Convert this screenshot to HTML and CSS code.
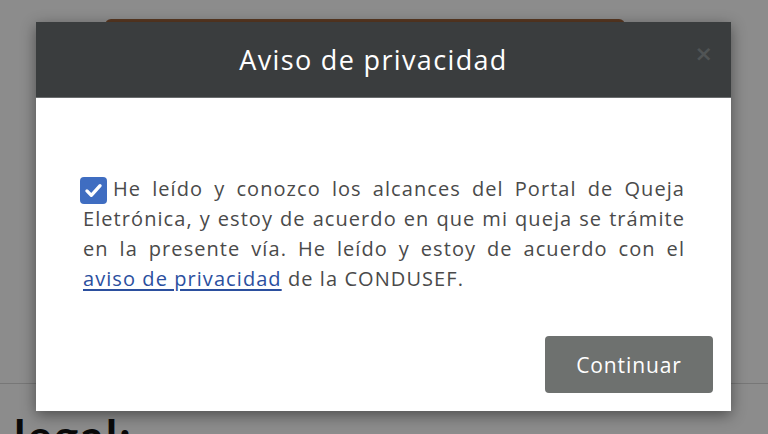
FILE: index.html
```html
<!DOCTYPE html>
<html lang="es">
<head>
<meta charset="utf-8">
<title>Aviso de privacidad</title>
<link rel="stylesheet" href="styles.css">
</head>
<body>
<div class="page">
  <div class="page-bar"></div>
  <div class="page-spacer"></div>
  <div class="page-rule"></div>
  <h2 class="page-heading">legal:</h2>
</div>
<div class="backdrop"></div>
<div class="modal" role="dialog" aria-labelledby="modal-title">
  <header class="modal-header">
    <h1 id="modal-title" class="modal-title">Aviso de privacidad</h1>
    <button class="modal-close" aria-label="Cerrar">&times;</button>
  </header>
  <div class="modal-body">
    <p class="consent">
      <span class="checkbox" aria-checked="true" role="checkbox">
        <svg viewBox="0 0 24 24" width="21" height="21"><path d="M4.5 12.5 L9.5 17.5 L19.5 6.5" fill="none" stroke="#fff" stroke-width="3.8" stroke-linecap="round" stroke-linejoin="round"/></svg>
      </span>He leído y conozco los alcances del Portal de Queja Eletrónica, y estoy de acuerdo en que mi queja se trámite en la presente vía. He leído y estoy de acuerdo con el <a href="#" class="link">aviso de privacidad</a> de la CONDUSEF.
    </p>
  </div>
  <footer class="modal-footer">
    <button class="btn-continue">Continuar</button>
  </footer>
</div>
</body>
</html>
```

FILE: styles.css
```css
* { box-sizing: border-box; }
html, body { margin: 0; padding: 0; }
body {
  width: 768px;
  height: 434px;
  overflow: hidden;
  background: #ffffff;
  font-family: "Open Sans", "Liberation Sans", sans-serif;
  position: relative;
}
.page {
  height: 434px;
  overflow: hidden;
  display: flex;
  flex-direction: column;
  padding: 19px 0 0 0;
}
.page > * { flex-shrink: 0; }
.page-bar {
  margin: 0 143px 0 105px;
  height: 30px;
  background: #a0673e;
  border-radius: 6px 6px 0 0;
}
.page-spacer { height: 334px; }
.page-rule {
  height: 1px;
  background: #d9d9d9;
}
.page-heading {
  margin: 29px 0 0 14px;
  font-family: "Lato", "Liberation Sans", sans-serif;
  font-weight: 700;
  font-size: 46px;
  line-height: 46px;
  letter-spacing: 2px;
  color: #111;
}
.backdrop {
  position: absolute;
  inset: 0;
  background: rgba(0, 0, 0, 0.45);
}
.modal {
  position: absolute;
  left: 36px;
  top: 22px;
  width: 695px;
  height: 389px;
  background: #fff;
  display: flex;
  flex-direction: column;
  box-shadow: 0 4px 14px rgba(0,0,0,0.45);
}
.modal-header {
  height: 76px;
  background: #3a3d3e;
  display: flex;
  align-items: center;
  justify-content: center;
  position: relative;
  border-bottom: 1px solid #6a6d6e;
}
.modal-title {
  margin: 0 20px 0 0;
  font-weight: 400;
  font-size: 27px;
  color: #fff;
  letter-spacing: 1.35px;
}
.modal-close {
  position: absolute;
  right: 18px;
  top: 21px;
  background: none;
  border: 0;
  padding: 0;
  font-family: "DejaVu Sans", sans-serif;
  font-size: 22px;
  font-weight: 700;
  line-height: 22px;
  color: #505455;
}
.modal-body {
  flex: 1;
  padding: 76px 46px 0 47px;
}
.consent {
  margin: 0;
  font-size: 20px;
  line-height: 30px;
  color: #4a4a4a;
  text-align: justify;
  letter-spacing: 1.07px;
}
.checkbox {
  display: inline-flex;
  align-items: center;
  justify-content: center;
  width: 27px;
  height: 27px;
  margin: 0 6px 0 -3px;
  background: #3f6dc1;
  border-radius: 4px;
  vertical-align: -5px;
}
.link {
  color: #2b4f9e;
  text-decoration: underline;
  text-underline-offset: 3px;
}
.modal-footer {
  display: flex;
  justify-content: flex-end;
  padding: 0 18px 18px 0;
}
.btn-continue {
  width: 168px;
  height: 57px;
  border: 0;
  border-radius: 4px;
  background: #6e716f;
  color: #fff;
  font-family: "Open Sans", "Liberation Sans", sans-serif;
  font-size: 21px;
  letter-spacing: 0.9px;
}
```
